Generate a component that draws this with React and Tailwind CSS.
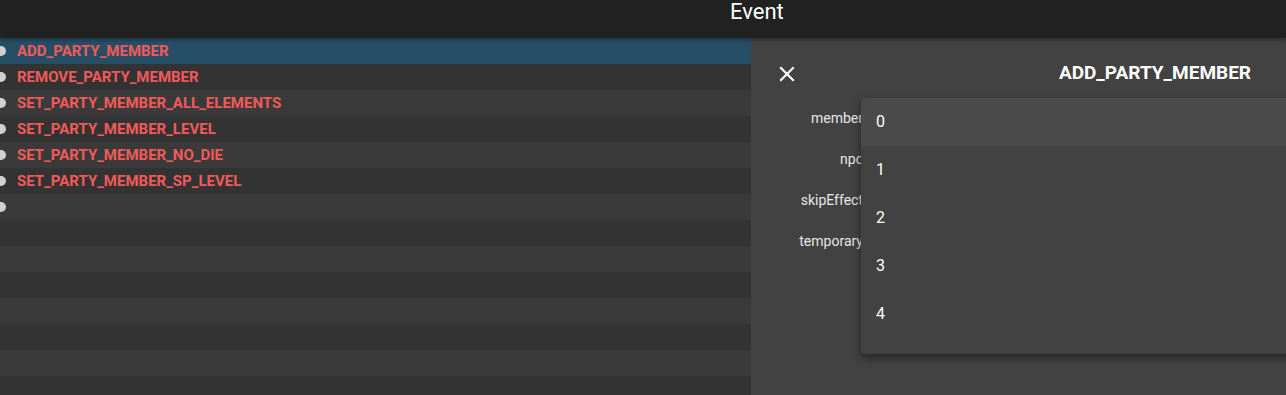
import React from "react";

const events = [
  "ADD_PARTY_MEMBER",
  "REMOVE_PARTY_MEMBER",
  "SET_PARTY_MEMBER_ALL_ELEMENTS",
  "SET_PARTY_MEMBER_LEVEL",
  "SET_PARTY_MEMBER_NO_DIE",
  "SET_PARTY_MEMBER_SP_LEVEL",
  "",
];

const rows = [...events, "", "", "", "", "", "", "", "", ""];

export default function App() {
  return (
    <div
      className="w-[1286px] h-[395px] overflow-hidden bg-[#424242] flex flex-col"
      style={{ fontFamily: "Roboto, 'Liberation Sans', sans-serif" }}
    >
      <div className="h-[38px] shrink-0 bg-[#212121] flex items-start pl-[730px] text-white text-[22px] leading-[24px] relative z-10 shadow-[0_2px_4px_rgba(0,0,0,0.35)]">
        Event
      </div>
      <div className="flex flex-1 min-h-0">
        <div className="w-[751px] shrink-0 flex flex-col">
          {rows.map((name, i) => {
            const bg =
              i === 0 ? "bg-[#264f66]" : i % 2 === 1 ? "bg-[#333333]" : "bg-[#3a3a3a]";
            return (
              <div key={i} className={`h-[26px] shrink-0 flex items-center relative ${bg}`}>
                {i < events.length && (
                  <span className="absolute left-[-4px] top-[8px] w-[10px] h-[10px] rounded-full bg-[#cfcfcf]" />
                )}
                <span className="pl-[17px] text-[15px] font-bold text-[#f25a5a]">{name}</span>
              </div>
            );
          })}
        </div>
        <div className="flex-1 relative bg-[#424242]">
          <div className="flex items-center h-[72px] pl-[28px] pr-[35px] pb-[1px]">
            <svg width="16" height="16" viewBox="0 0 16 16" className="shrink-0">
              <path d="M2 2 L14 14 M14 2 L2 14" stroke="white" strokeWidth="2.2" strokeLinecap="square" />
            </svg>
            <div className="flex-1 text-right text-white font-bold text-[19px]">ADD_PARTY_MEMBER</div>
          </div>
          <div className="flex flex-col w-[112px] items-end text-[14px] text-[#e8e8e8] gap-0">
            <div className="h-[41px] flex items-center -mt-[12px]">member</div>
            <div className="h-[41px] flex items-center">npc</div>
            <div className="h-[41px] flex items-center">skipEffect</div>
            <div className="h-[41px] flex items-center">temporary</div>
          </div>
          <div className="absolute left-[110px] top-[60px] w-[500px] h-[256px] bg-[#424242] rounded-[4px] shadow-[0_4px_10px_rgba(0,0,0,0.45)] overflow-hidden flex flex-col text-white text-[16px]">
            {["0", "1", "2", "3", "4"].map((v, i) => (
              <div
                key={v}
                className={`h-[48px] shrink-0 flex items-center px-[15px] ${i === 0 ? "bg-[#4a4a4a]" : ""}`}
              >
                {v}
              </div>
            ))}
          </div>
        </div>
      </div>
    </div>
  );
}
